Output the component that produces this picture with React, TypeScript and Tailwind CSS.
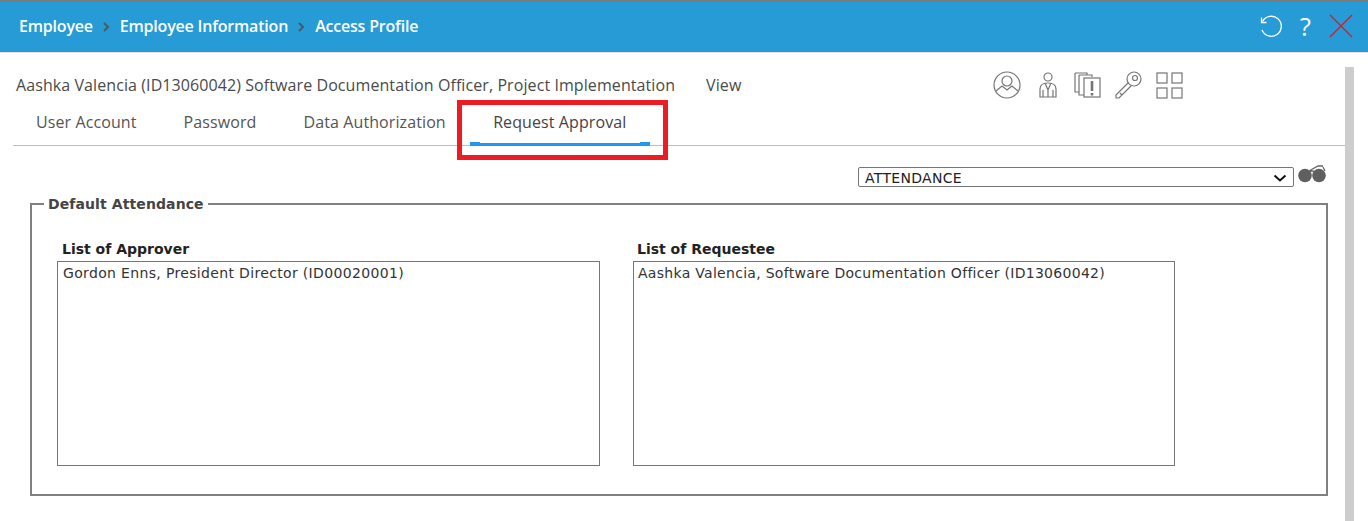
import React from "react";

const Chevron = () => (
  <svg width="9" height="12" viewBox="0 0 9 12" className="mx-[9px] mt-[2px]">
    <path d="M2 2l4 4-4 4" fill="none" stroke="#4a5a66" strokeWidth="2" />
  </svg>
);

const Ico = ({ children, className }: { children: React.ReactNode; className?: string }) => (
  <svg width="30" height="30" viewBox="0 0 30 30" fill="none" stroke="#757575" strokeWidth="1.2" className={className}>
    {children}
  </svg>
);

const tabs = ["User Account", "Password", "Data Authorization"];

export default function App() {
  return (
    <div className="relative h-[521px] w-[1368px] overflow-hidden bg-white font-['Open_Sans','Noto_Sans',sans-serif] text-[#444]">
      <header className="flex h-[53px] items-center border-t-2 border-b border-t-[#7b7b7b] border-b-[#e3e3e3] bg-[#269bd5] pb-[2px] pl-[19px] pr-[14px]">
        <nav className="flex items-center text-[16px] font-semibold tracking-[-0.2px] text-white">
          <span>Employee</span>
          <Chevron />
          <span>Employee Information</span>
          <Chevron />
          <span>Access Profile</span>
        </nav>
        <div className="ml-auto flex items-center">
          <svg width="26" height="26" viewBox="0 0 26 26" fill="none" stroke="#fff" strokeWidth="1.3" className="mr-[17px]">
            <path d="M5.5 8.5A10 10 0 1 1 5 17" />
            <path d="M4.5 4.5v5h5" />
          </svg>
          <span className="mr-[17px] text-[26px] leading-none text-white">?</span>
          <svg width="26" height="26" viewBox="0 0 26 26" stroke="#c8202f" strokeWidth="1.3">
            <path d="M2 2l22 22M24 2L2 24" />
          </svg>
        </div>
      </header>

      <div className="flex">
        <main className="w-[1345px] pl-[13px]">
          <div className="flex h-[47px] items-end pl-[3px] text-[16px] leading-[22px] tracking-[0.085px] text-[#4a4a4a]">
            <span className="mb-[4px]">Aashka Valencia (ID13060042) Software Documentation Officer, Project Implementation</span>
            <span className="mb-[4px] ml-[31px]">View</span>
            <div className="ml-[251px] flex items-center gap-[11px]">
              <Ico>
                <circle cx="15" cy="15" r="13" />
                <circle cx="15" cy="11" r="5" />
                <path d="M4 21l6-5 5 4 5-4 6 5" />
              </Ico>
              <Ico>
                <circle cx="15" cy="7" r="4" />
                <path d="M7 27V19c0-4 3-6 8-6s8 2 8 6v8zM12 13l3 7 3-7M15 20v7M10 20v7M20 20v7" />
              </Ico>
              <Ico>
                <path d="M1 3h12v2M1 3v19h4" />
                <path d="M5 5h13v2M5 5v20h5" />
                <rect x="10" y="8" width="16" height="19" />
                <path d="M18 11v10" strokeWidth="2.6" />
                <path d="M18 23v2.5" strokeWidth="2.6" />
              </Ico>
              <Ico className="-ml-[2px]">
                <circle cx="21" cy="9" r="7" />
                <circle cx="22" cy="8" r="2.5" />
                <path d="M15 13L3 25v3h3l12-12M7 23l2 2" />
              </Ico>
              <Ico>
                <rect x="3" y="3" width="10" height="10" />
                <rect x="18" y="3" width="10" height="10" />
                <rect x="3" y="18" width="10" height="10" />
                <rect x="18" y="18" width="10" height="10" />
              </Ico>
            </div>
          </div>

          <div className="flex h-[46px] items-start border-b-[1.5px] border-[#bdbdbd] text-[16px] leading-[22px] tracking-[0.1px] text-[#555]">
            <div className="ml-[23px] mt-[11px] flex gap-[47px]">
              {tabs.map((t) => (
                <span key={t}>{t}</span>
              ))}
            </div>
            <div className="relative ml-[24px] h-[46px] w-[180px] border-b-[3px] border-[#2196f3] pt-[11px] text-center font-medium text-[#444]">
              Request Approval
              <span className="absolute -bottom-[3px] left-0 h-[4px] w-[10px] bg-[#2196f3]" />
              <span className="absolute -bottom-[3px] right-0 h-[4px] w-[10px] bg-[#2196f3]" />
            </div>
          </div>

          <div className="flex h-[41px] items-start justify-end pr-[19px] pt-[21px] font-['DejaVu_Sans',sans-serif] text-[14px]">
            <div className="relative mr-[4px]">
              <select className="block h-[20px] w-[436px] appearance-none rounded-[2px] border border-[#767676] bg-white pl-[6px] pt-[1px] text-[14px] leading-none tracking-[0.3px] text-[#222]">
                <option>ATTENDANCE</option>
              </select>
              <svg width="14" height="8" viewBox="0 0 14 8" className="pointer-events-none absolute right-[7px] top-[7px]">
                <path d="M1.5 1.5L7 6.5l5.5-5" fill="none" stroke="#111" strokeWidth="2" />
              </svg>
            </div>
            <svg width="28" height="19" viewBox="0 0 28 19" fill="#5f5f5f" className="-mt-[3px]">
              <circle cx="7" cy="11.5" r="6.8" />
              <circle cx="21" cy="11.5" r="6.8" />
              <path d="M11 8q3-2 6 0M11 7l9-5 5 0M25 3l2 4" fill="none" stroke="#666" strokeWidth="1.3" />
            </svg>
          </div>

          <fieldset className="ml-[17px] mt-[9px] h-[300px] w-[1298px] border-2 border-[#808080] pl-[25px] font-['DejaVu_Sans',sans-serif] text-[14px] text-[#333]">
            <legend className="ml-[-13px] px-[4px] pt-[1px] text-[14px] leading-[15px] font-bold tracking-[0.1px] text-[#444]">Default Attendance</legend>
            <div className="mt-[29px] flex gap-[33px]">
              <section className="w-[543px]">
                <h3 className="pl-[5px] text-[14px] leading-[16px] font-bold text-[#222]">List of Approver</h3>
                <div className="mt-[4px] h-[205px] border border-[#767676] pl-[5px] pt-[3px] leading-[16px] tracking-[0.34px]">Gordon Enns, President Director (ID00020001)</div>
              </section>
              <section className="w-[542px]">
                <h3 className="pl-[4px] text-[14px] leading-[16px] font-bold text-[#222]">List of Requestee</h3>
                <div className="mt-[4px] h-[205px] border border-[#767676] pl-[4px] pt-[3px] leading-[16px] tracking-[0.29px]">Aashka Valencia, Software Documentation Officer (ID13060042)</div>
              </section>
            </div>
          </fieldset>
        </main>
        <div className="mt-[14px] h-[454px] w-[9px] bg-[#cdcdcd]" />
      </div>

      <div className="pointer-events-none absolute left-[457px] top-[100px] h-[60px] w-[211px] border-[5px] border-[#ed1c24]" />
    </div>
  );
}
